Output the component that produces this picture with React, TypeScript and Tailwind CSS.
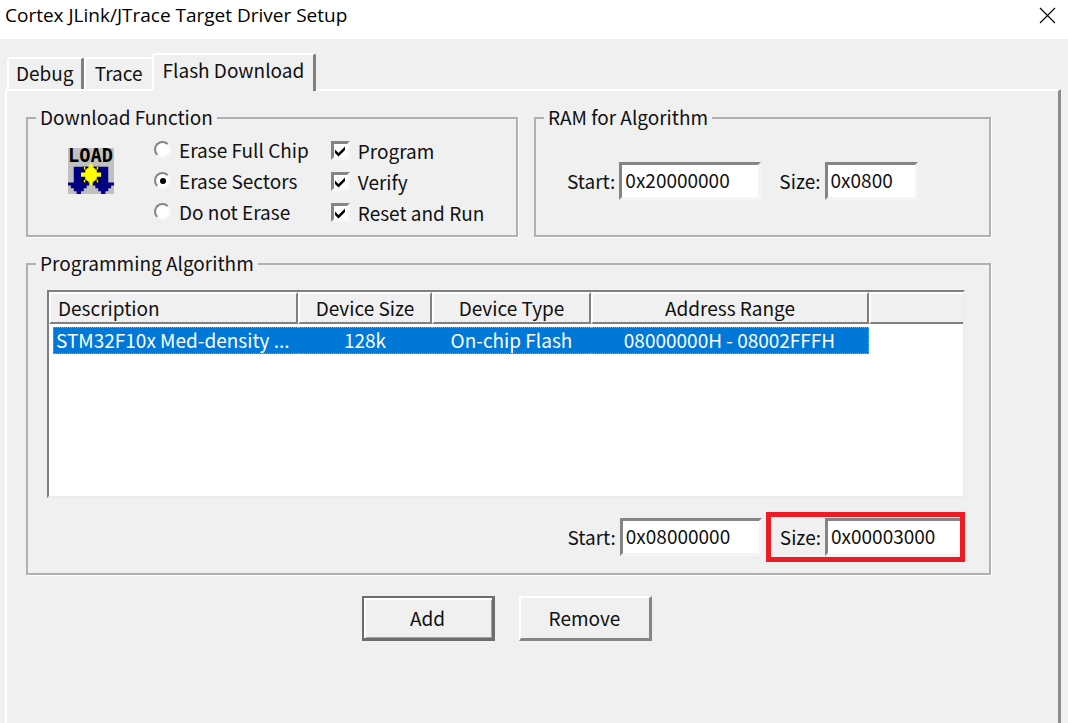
import { useState } from 'react'
import type { ReactNode } from 'react'
import { clsx } from 'clsx'

const TABS = ['Debug', 'Trace', 'Flash Download']
const ERASE_MODES = ['Erase Full Chip', 'Erase Sectors', 'Do not Erase']
const OPTIONS = ['Program', 'Verify', 'Reset and Run']

function GroupBox({ title, className, children }: { title: string; className?: string; children: ReactNode }) {
  return (
    <fieldset className={clsx('min-w-0 border-2 border-[#b0b0b0] shadow-[1px_1px_0_#fff] pr-6 pl-[19px]', className)}>
      <legend className="-ml-[11px] px-1 pb-[2px] leading-[22px]">{title}</legend>
      {children}
    </fieldset>
  )
}

function LoadIcon() {
  return (
    <svg
      viewBox="0 0 32 32"
      className="mt-[14px] size-[46px] shrink-0 overflow-visible"
      aria-hidden="true"
    >
      <rect width="32" height="32" fill="#c0c0c0" />
      <path
        fill="#000080"
        d="M4 13H14V24H15V26H13V28H11V30H9V32H6V30H4V28H2V26H0V24H4ZM18 13H28V24H32V26H30V28H28V30H26V32H23V30H21V28H19V26H17V24H18Z"
      />
      <path fill="#000" d="M10 13H14V16H10ZM18 13H22V16H18ZM10 21H14V24H10ZM18 21H22V24H18Z" />
      <path
        fill="#ff0"
        d="M15 11H17V14H19V15H20V17H23V20H20V22H19V23H17V26H15V23H13V22H12V20H9V17H12V15H13V14H15ZM11 13H12V15H11ZM20 13H21V15H20ZM11 22H12V24H11ZM20 22H21V24H20Z"
      />
      <text x="0" y="10" fontSize="13" fontWeight="700" fontFamily="'DejaVu Sans Mono', monospace">
        LOAD
      </text>
    </svg>
  )
}

function Radio({ label, checked, onChange }: { label: string; checked: boolean; onChange: () => void }) {
  return (
    <label className="flex h-[31px] items-center gap-2">
      <span className="grid place-items-center">
        <input
          type="radio"
          name="erase"
          checked={checked}
          onChange={onChange}
          className="peer col-start-1 row-start-1 size-[17px] appearance-none rounded-full border-2 border-t-[#858585] border-l-[#858585] border-r-[#f8f8f8] border-b-[#f8f8f8] bg-white"
        />
        <span className="pointer-events-none col-start-1 row-start-1 hidden size-[6px] rounded-full bg-black peer-checked:block" />
      </span>
      {label}
    </label>
  )
}

function Check({ label }: { label: string }) {
  return (
    <label className="flex h-[31px] items-center gap-2">
      <span className="grid place-items-center">
        <input
          type="checkbox"
          defaultChecked
          className="peer col-start-1 row-start-1 size-[19px] appearance-none border-[3px] border-t-[#858585] border-l-[#858585] border-r-[#f8f8f8] border-b-[#f8f8f8] bg-white"
        />
        <svg viewBox="0 0 12 12" className="pointer-events-none col-start-1 row-start-1 hidden size-3 peer-checked:block">
          <path d="M1 4.5L4.5 8L11 1.5V5L4.5 11.5L1 8Z" />
        </svg>
      </span>
      {label}
    </label>
  )
}

function Field({ label, value, className }: { label: string; value: string; className: string }) {
  return (
    <label className="flex items-center gap-1">
      {label}
      <input
        type="text"
        defaultValue={value}
        className={clsx(
          'h-[38px] border-[3px] border-t-[#858585] border-l-[#858585] border-r-[#f4f4f4] border-b-[#f4f4f4] bg-white px-[3px] pb-1 outline-none',
          className,
        )}
      />
    </label>
  )
}

function HeadCell({ children, left }: { children?: ReactNode; left?: boolean }) {
  return (
    <th
      className={clsx(
        'h-8 border-2 border-t-white border-l-white border-r-[#808080] border-b-[#808080] bg-[#f0f0f0] p-0 font-normal last:border-r-0',
        left ? 'pl-[7px] text-left' : 'text-center',
      )}
    >
      {children}
    </th>
  )
}

export default function App() {
  const [tab, setTab] = useState('Flash Download')
  const [erase, setErase] = useState('Erase Sectors')

  return (
    <div className="flex min-h-screen flex-col bg-[#f0f0f0] font-['Noto_Sans_CJK_SC',sans-serif] text-[19px] leading-6 text-[#111]">
      {/* Title bar */}
      <header className="flex h-[39px] items-start justify-between bg-white pt-[3px] pr-3 pl-[5px] text-black">
        <h1 className="font-['Open_Sans',sans-serif] text-[19px]">Cortex JLink/JTrace Target Driver Setup</h1>
        <button aria-label="Close" className="mt-1">
          <svg viewBox="0 0 17 17" className="size-[17px]" stroke="#000" strokeWidth="1.2">
            <path d="M1 1L16 16M16 1L1 16" />
          </svg>
        </button>
      </header>

      {/* Tabs */}
      <div role="tablist" className="flex items-end pt-[14px] pl-[7px]">
        {TABS.map((name) => (
          <button
            key={name}
            role="tab"
            aria-selected={tab === name}
            onClick={() => setTab(name)}
            className={clsx(
              'rounded-t-[3px] border-t-2 border-l-2 border-white bg-[#f0f0f0]',
              tab === name
                ? 'relative -mb-[2px] h-[38px] border-r-[3px] border-r-[#808080] px-[9px] pb-[6px]'
                : 'h-8 min-w-[68px] px-[7px] pb-[2px] first:border-r-[3px] first:border-r-[#808080]',
            )}
          >
            {name}
          </button>
        ))}
      </div>

      {/* Page */}
      <main className="mr-[7px] ml-[5px] flex-1 border-2 border-r-[3px] border-b-0 border-white border-r-[#8c8c8c] pt-[15px] pr-[67px] pl-[19px]">
        <div className="grid grid-cols-[492fr_457fr] gap-4">
          <GroupBox title="Download Function" className="h-[131px]">
            <div className="flex items-start pt-1 pl-[21px]">
              <LoadIcon />
              <div className="ml-10">
                {ERASE_MODES.map((mode) => (
                  <Radio key={mode} label={mode} checked={erase === mode} onChange={() => setErase(mode)} />
                ))}
              </div>
              <div className="mt-px ml-[22px]">
                {OPTIONS.map((option) => (
                  <Check key={option} label={option} />
                ))}
              </div>
            </div>
          </GroupBox>

          <GroupBox title="RAM for Algorithm" className="h-[131px]">
            <div className="flex gap-[18px] pt-8 pl-3">
              <Field label="Start:" value="0x20000000" className="w-[142px]" />
              <Field label="Size:" value="0x0800" className="w-[93px]" />
            </div>
          </GroupBox>
        </div>

        <GroupBox title="Programming Algorithm" className="mt-[15px] pb-[17px]">
          <div className="mt-[14px] h-52 border-2 border-t-[#808080] border-l-[#808080] border-r-[#ececec] border-b-[#ececec] bg-white">
            <table className="w-full table-fixed border-separate border-spacing-0">
              <colgroup>
                <col className="w-[249px]" />
                <col className="w-[134px]" />
                <col className="w-[159px]" />
                <col className="w-[278px]" />
                <col />
              </colgroup>
              <thead>
                <tr>
                  <HeadCell left>Description</HeadCell>
                  <HeadCell>Device Size</HeadCell>
                  <HeadCell>Device Type</HeadCell>
                  <HeadCell>Address Range</HeadCell>
                  <HeadCell />
                </tr>
              </thead>
              <tbody className="text-center text-white">
                <tr>
                  <td className="pt-[3px] pl-1">
                    <div className="h-[27px] border border-r-0 border-dotted border-[#ff8728] bg-[#0078d7] pl-[2px] text-left">
                      STM32F10x Med-density ...
                    </div>
                  </td>
                  <td className="pt-[3px]">
                    <div className="h-[27px] border-y border-dotted border-[#ff8728] bg-[#0078d7]">128k</div>
                  </td>
                  <td className="pt-[3px]">
                    <div className="h-[27px] border-y border-dotted border-[#ff8728] bg-[#0078d7]">On-chip Flash</div>
                  </td>
                  <td className="pt-[3px]">
                    <div className="h-[27px] border border-l-0 border-dotted border-[#ff8728] bg-[#0078d7]">
                      08000000H - 08002FFFH
                    </div>
                  </td>
                  <td />
                </tr>
              </tbody>
            </table>
          </div>

          <div className="mt-5 flex justify-end gap-[18px]">
            <Field label="Start:" value="0x08000000" className="w-[142px]" />
            <div className="relative">
              <Field label="Size:" value="0x00003000" className="w-[140px]" />
              <span className="pointer-events-none absolute -inset-y-[6px] right-0 -left-[14px] border-[5px] border-[#ed1c24]" />
            </div>
          </div>
        </GroupBox>

        <div className="mt-[21px] flex justify-center gap-6 pr-1">
          <button className="h-[45px] w-[133px] border-2 border-r-[3px] border-b-[3px] border-[#6d6d6d] shadow-[inset_2px_2px_0_#fff,inset_-1px_-1px_0_#a0a0a0]">
            Add
          </button>
          <button className="h-[45px] w-[133px] border-2 border-r-[3px] border-b-[3px] border-white border-r-[#858585] border-b-[#858585]">
            Remove
          </button>
        </div>
      </main>
    </div>
  )
}
